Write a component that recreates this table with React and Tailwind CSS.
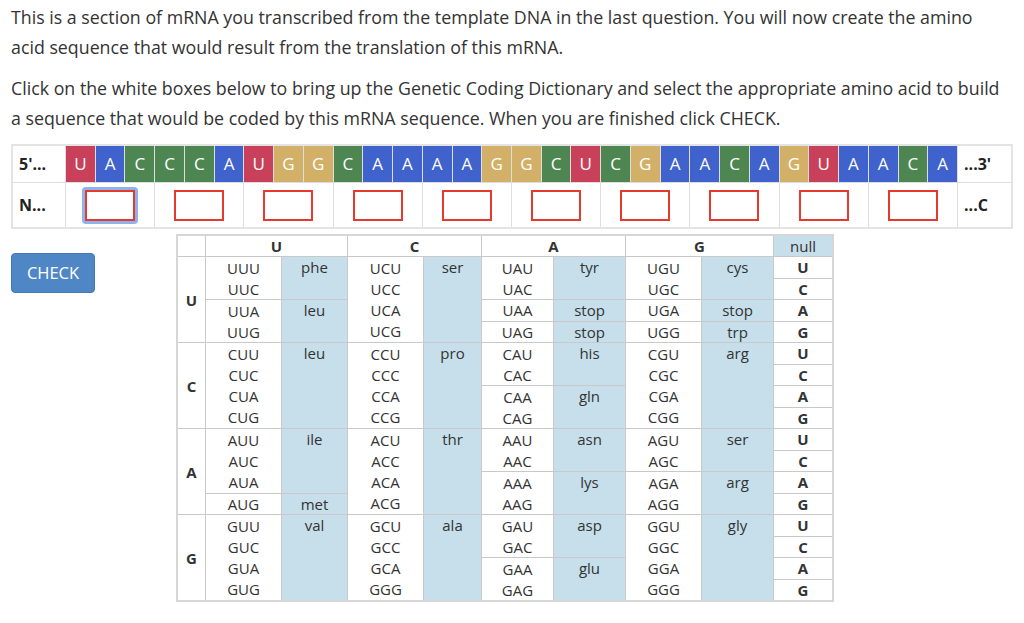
import React from 'react';

// mRNA strand shown in the sequence strip
const seq = 'UACCCAUGGCAAAAGGCUCGAACAGUAACA'.split('');

const baseColor = {
  U: 'bg-[#c8405a]',
  A: 'bg-[#3f62cd]',
  C: 'bg-[#4e8652]',
  G: 'bg-[#d3b067]',
};

// genetic code dictionary, grouped the way the table draws it
const sections = [
  {
    base: 'U',
    cols: [
      [{ codons: ['UUU', 'UUC'], aa: 'phe' }, { codons: ['UUA', 'UUG'], aa: 'leu' }],
      [{ codons: ['UCU', 'UCC', 'UCA', 'UCG'], aa: 'ser' }],
      [{ codons: ['UAU', 'UAC'], aa: 'tyr' }, { codons: ['UAA'], aa: 'stop' }, { codons: ['UAG'], aa: 'stop' }],
      [{ codons: ['UGU', 'UGC'], aa: 'cys' }, { codons: ['UGA'], aa: 'stop' }, { codons: ['UGG'], aa: 'trp' }],
    ],
  },
  {
    base: 'C',
    cols: [
      [{ codons: ['CUU', 'CUC', 'CUA', 'CUG'], aa: 'leu' }],
      [{ codons: ['CCU', 'CCC', 'CCA', 'CCG'], aa: 'pro' }],
      [{ codons: ['CAU', 'CAC'], aa: 'his' }, { codons: ['CAA', 'CAG'], aa: 'gln' }],
      [{ codons: ['CGU', 'CGC', 'CGA', 'CGG'], aa: 'arg' }],
    ],
  },
  {
    base: 'A',
    cols: [
      [{ codons: ['AUU', 'AUC', 'AUA'], aa: 'ile' }, { codons: ['AUG'], aa: 'met' }],
      [{ codons: ['ACU', 'ACC', 'ACA', 'ACG'], aa: 'thr' }],
      [{ codons: ['AAU', 'AAC'], aa: 'asn' }, { codons: ['AAA', 'AAG'], aa: 'lys' }],
      [{ codons: ['AGU', 'AGC'], aa: 'ser' }, { codons: ['AGA', 'AGG'], aa: 'arg' }],
    ],
  },
  {
    base: 'G',
    cols: [
      [{ codons: ['GUU', 'GUC', 'GUA', 'GUG'], aa: 'val' }],
      [{ codons: ['GCU', 'GCC', 'GCA', 'GGG'], aa: 'ala' }],
      [{ codons: ['GAU', 'GAC'], aa: 'asp' }, { codons: ['GAA', 'GAG'], aa: 'glu' }],
      [{ codons: ['GGU', 'GGC', 'GGA', 'GGG'], aa: 'gly' }],
    ],
  },
];

const thirdBases = ['U', 'C', 'A', 'G'];

// grid placement classes, spelled out so Tailwind picks them up
const rowStart = [
  '', 'row-start-1', 'row-start-2', 'row-start-3', 'row-start-4', 'row-start-5', 'row-start-6',
  'row-start-7', 'row-start-8', 'row-start-9', 'row-start-10', 'row-start-11', 'row-start-12',
  'row-start-13', 'row-start-14', 'row-start-15', 'row-start-16', 'row-start-17',
];
const rowSpan = ['', 'row-span-1', 'row-span-2', 'row-span-3', 'row-span-4'];
const colStart = [
  '', 'col-start-1', 'col-start-2', 'col-start-3', 'col-start-4', 'col-start-5',
  'col-start-6', 'col-start-7', 'col-start-8', 'col-start-9', 'col-start-10',
];

function SequenceStrip() {
  return (
    <div className="grid grid-cols-[52px_repeat(30,minmax(0,1fr))_53px] grid-rows-[36px_44px] gap-px bg-[#dedede] border-2 border-[#e4e4e4]">
      <div className="bg-white flex items-center pl-[6px] font-bold text-[16px] text-[#222]">5'...</div>
      {seq.map((b, i) => (
        <div key={i} className={`${baseColor[b]} flex items-center justify-center text-white text-[17px]`}>
          {b}
        </div>
      ))}
      <div className="bg-white flex items-center pl-[6px] font-bold text-[16px] text-[#222]">...3'</div>

      <div className="bg-white flex items-center pl-[6px] font-bold text-[16px] text-[#222]">N...</div>
      {Array.from({ length: 10 }).map((_, i) => (
        <div key={i} className="col-span-3 bg-white flex items-center justify-center">
          <div className={`p-[3px] rounded-[4px] ${i === 0 ? 'bg-[#8db3ef]' : ''}`}>
            <div className="w-[50px] h-[31px] border-2 border-[#e6392e] bg-white" />
          </div>
        </div>
      ))}
      <div className="bg-white flex items-center pl-[6px] font-bold text-[16px] text-[#222]">...C</div>
    </div>
  );
}

function CodonTable() {
  const cells = [];

  // header row
  cells.push(<div key="h0" className="bg-white row-start-1 col-start-1" />);
  thirdBases.forEach((b, c) => {
    cells.push(
      <div
        key={`h${b}`}
        className={`row-start-1 ${colStart[2 + c * 2]} col-span-2 bg-white flex items-center justify-center font-bold`}
      >
        {b}
      </div>
    );
  });
  cells.push(
    <div key="hnull" className="row-start-1 col-start-10 bg-[#c6dfea] flex items-center justify-center">
      null
    </div>
  );

  sections.forEach((sec, s) => {
    const top = 2 + s * 4;
    cells.push(
      <div
        key={`l${s}`}
        className={`${rowStart[top]} row-span-4 col-start-1 bg-white flex items-center justify-center font-bold`}
      >
        {sec.base}
      </div>
    );

    sec.cols.forEach((groups, c) => {
      let offset = 0;
      groups.forEach((g, gi) => {
        const n = g.codons.length;
        const r = top + offset;
        cells.push(
          <div
            key={`c${s}-${c}-${gi}`}
            className={`${rowStart[r]} ${rowSpan[n]} ${colStart[2 + c * 2]} bg-white flex flex-col min-h-0`}
          >
            {g.codons.map((cd, k) => (
              <div key={k} className="flex-1 min-h-0 flex items-center justify-center leading-[20px]">
                {cd}
              </div>
            ))}
          </div>
        );
        cells.push(
          <div
            key={`a${s}-${c}-${gi}`}
            className={`${rowStart[r]} ${rowSpan[n]} ${colStart[3 + c * 2]} bg-[#c6dfea]`}
          >
            <div className="h-[20.5px] flex items-center justify-center leading-[20px]">{g.aa}</div>
          </div>
        );
        offset += n;
      });
    });

    thirdBases.forEach((b, k) => {
      cells.push(
        <div
          key={`n${s}-${k}`}
          className={`${rowStart[top + k]} col-start-10 bg-white flex items-center justify-center font-bold leading-[20px]`}
        >
          {b}
        </div>
      );
    });
  });

  return (
    <div className="grid grid-cols-[27px_75px_65px_75px_57px_71px_71px_75px_71px_58px] grid-rows-[20px_repeat(16,20.5px)] gap-px bg-[#c9c9c9] border-2 border-[#d6d6d6] text-[15px] text-[#333] leading-[20px]">
      {cells}
    </div>
  );
}

export default function App() {
  return (
    <div className="bg-white min-h-screen px-[11px] pt-[2px] font-['Open_Sans',sans-serif] text-[#333]">
      <p className="text-[17.8px] leading-[30px] mb-[11px]">
        This is a section of mRNA you transcribed from the template DNA in the last question. You will now create the amino
        <br />
        acid sequence that would result from the translation of this mRNA.
      </p>
      <p className="text-[17.8px] leading-[30px] mb-[11px]">
        Click on the white boxes below to bring up the Genetic Coding Dictionary and select the appropriate amino acid to build
        a sequence that would be coded by this mRNA sequence. When you are finished click CHECK.
      </p>

      <SequenceStrip />

      <div className="flex items-start mt-[5px]">
        <button className="mt-[19px] w-[84px] h-[40px] rounded-[4px] bg-[#4f87c6] border border-[#4279b8] text-white text-[16.5px]">
          CHECK
        </button>
        <div className="ml-[81px]">
          <CodonTable />
        </div>
      </div>
    </div>
  );
}
